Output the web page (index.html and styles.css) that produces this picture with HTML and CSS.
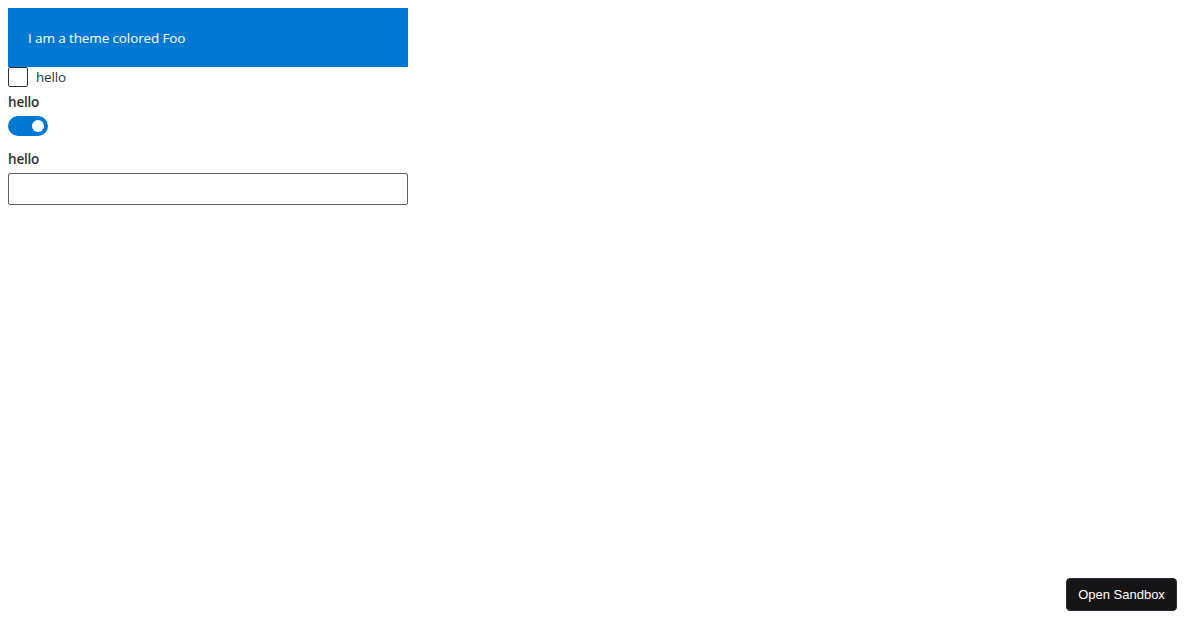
FILE: index.html
```html
<!DOCTYPE html>
<html>
<head>
<meta charset="utf-8">
<link rel="stylesheet" href="styles.css">
</head>
<body>
<div class="stack">
  <div class="foo">I am a theme colored Foo</div>
  <label class="checkbox">
    <span class="box"></span>
    <span class="cb-label">hello</span>
  </label>
  <div class="field-label">hello</div>
  <div class="toggle"><span class="knob"></span></div>
  <div class="field-label second">hello</div>
  <input class="textfield" type="text">
</div>
<button class="sandbox">Open Sandbox</button>
</body>
</html>
```
FILE: styles.css
```css
body {
  margin: 8px;
  font-family: "Segoe UI", "Open Sans", "Noto Sans", sans-serif;
  font-size: 14px;
  color: #323130;
  background: #fff;
}
.stack {
  width: 400px;
  display: flex;
  flex-direction: column;
}
.foo {
  background: #0078d4;
  color: #fff;
  padding: 21px 20px 19px;
  height: 19px;
  line-height: 19px;
  font-size: 13.5px;
  letter-spacing: -0.12px;
}
.checkbox {
  display: flex;
  align-items: center;
  height: 20px;
}
.box {
  width: 18px;
  height: 18px;
  border: 1px solid #323130;
  border-radius: 2px;
  box-sizing: content-box;
}
.cb-label {
  margin-left: 8px;
  font-size: 13.5px;
  letter-spacing: -0.2px;
  line-height: 20px;
}
.field-label {
  font-weight: 600;
  padding: 6px 0 4px;
  line-height: 19px;
  font-size: 13.5px;
  letter-spacing: -0.2px;
}
.toggle {
  width: 40px;
  height: 20px;
  border-radius: 10px;
  background: #0078d4;
  position: relative;
  margin-bottom: 8px;
}
.knob {
  position: absolute;
  width: 12px;
  height: 12px;
  border-radius: 50%;
  background: #fff;
  top: 4px;
  right: 4px;
}
.textfield {
  box-sizing: border-box;
  width: 400px;
  height: 32px;
  border: 1px solid #605e5c;
  border-radius: 2px;
  margin: 0;
  padding: 0 8px;
  font: inherit;
}
.sandbox {
  position: fixed;
  right: 23px;
  bottom: 19px;
  width: 111px;
  height: 33px;
  background: #151515;
  color: #fff;
  border: 1px solid #2a2a3a;
  border-radius: 4px;
  font-family: "Liberation Sans", Arial, sans-serif;
  font-size: 13px;
  padding: 0;
}
```
